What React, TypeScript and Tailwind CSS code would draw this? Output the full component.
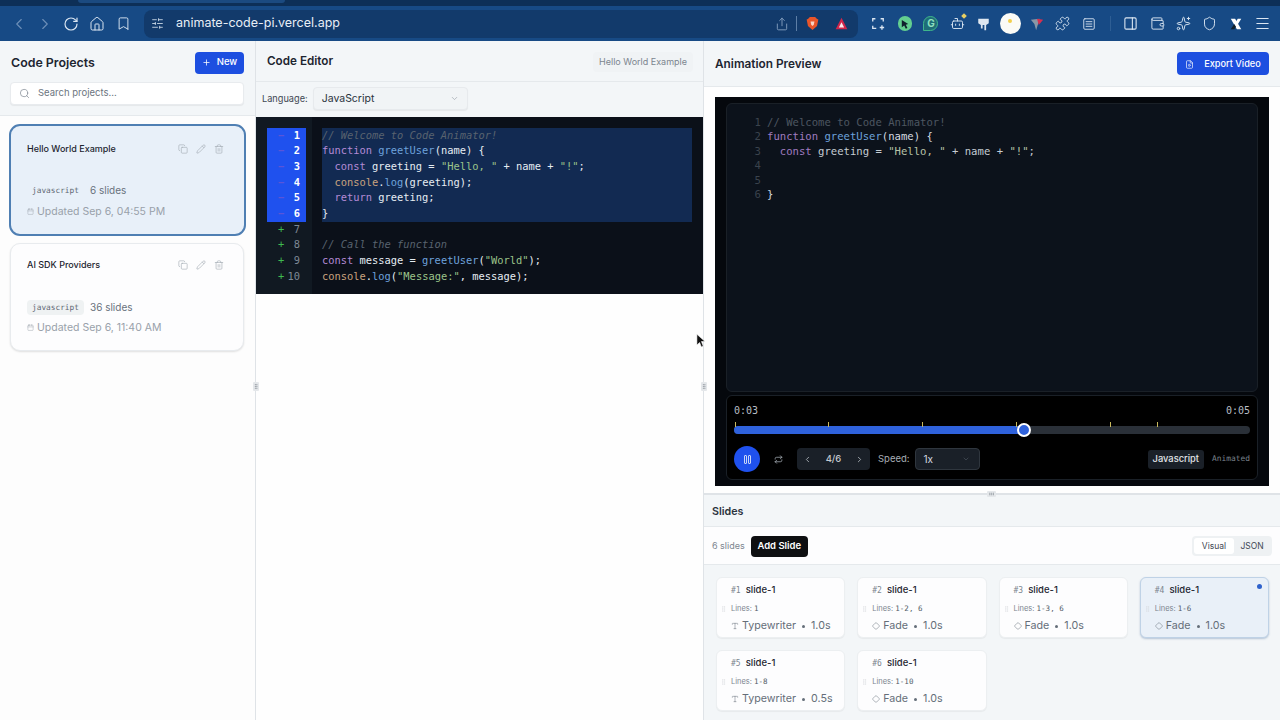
import {
  Bookmark,
  Calendar,
  ChevronDown,
  ChevronLeft,
  ChevronRight,
  Copy,
  FileVideo,
  GripHorizontal,
  GripVertical,
  Home,
  Menu,
  PanelRight,
  Pencil,
  Plus,
  Puzzle,
  Repeat,
  RotateCw,
  Search,
  Share,
  Shield,
  SlidersHorizontal,
  Sparkles,
  Trash2,
  Type,
  Wallet,
  Diamond,
  Bot,
  SquareMenu,
} from "lucide-react";

type Token = [string, string];

const kw = "text-[#b48ad6]";
const fn = "text-[#6ea2dc]";
const str = "text-[#9cc48a]";
const txt = "text-[#e6edf3]";
const cm = "text-[#59636f] italic";
const con = "text-[#c9a27e]";

const editorLines: Token[][] = [
  [["// Welcome to Code Animator!", cm]],
  [["function ", kw], ["greetUser", fn], ["(name) {", txt]],
  [["  const ", kw], ["greeting = ", txt], ['"Hello, "', str], [" + name + ", txt], ['"!"', str], [";", txt]],
  [["  console", con], [".", txt], ["log", fn], ["(greeting);", txt]],
  [["  return ", kw], ["greeting;", txt]],
  [["}", txt]],
  [],
  [["// Call the function", cm]],
  [["const ", kw], ["message = ", txt], ["greetUser", fn], ["(", txt], ['"World"', str], [");", txt]],
  [["console", con], [".", txt], ["log", fn], ["(", txt], ['"Message:"', str], [", message);", txt]],
];

const previewLines: Token[][] = [
  [["// Welcome to Code Animator!", "text-[#4d5661]"]],
  [["function ", "text-[#a07cc0]"], ["greetUser", fn], ["(name) {", "text-[#d5dbe1]"]],
  [["  const ", "text-[#a07cc0]"], ["greeting = ", "text-[#c5ccd3]"], ['"Hello, "', "text-[#b7c2a8]"], [" + name + ", "text-[#c5ccd3]"], ['"!"', "text-[#b7c2a8]"], [";", "text-[#c5ccd3]"]],
  [],
  [],
  [["}", "text-[#d5dbe1]"]],
];

const slides = [
  { id: 1, lines: "1", kind: "Typewriter", time: "1.0s" },
  { id: 2, lines: "1-2, 6", kind: "Fade", time: "1.0s" },
  { id: 3, lines: "1-3, 6", kind: "Fade", time: "1.0s" },
  { id: 4, lines: "1-6", kind: "Fade", time: "1.0s", active: true },
  { id: 5, lines: "1-8", kind: "Typewriter", time: "0.5s" },
  { id: 6, lines: "1-10", kind: "Fade", time: "1.0s" },
];

const ticks = [1, 94, 188, 282, 376, 423];

const mono = "font-['DejaVu_Sans_Mono',monospace]";

function ExtSlot({ children }: { children: React.ReactNode }) {
  return <div className="w-[26.4px] flex items-center justify-center shrink-0">{children}</div>;
}

function BrowserBar() {
  return (
    <div className="shrink-0">
      <div className="h-[6px] bg-[#0d2f57]">
        <div className="ml-[78px] w-[207px] h-[3px] bg-[#1b4a80] rounded-b" />
      </div>
      <div className="h-[35px] bg-[#174a85] flex items-center text-[#dbe6f2]">
        <div className="w-[144px] flex items-center shrink-0 pl-[10px] gap-[8px]">
          <ChevronLeft className="w-[18px] h-[18px] text-[#6d8fb8]" strokeWidth={1.5} />
          <ChevronRight className="w-[18px] h-[18px] text-[#6d8fb8]" strokeWidth={1.5} />
          <RotateCw className="w-[16px] h-[16px] ml-[1px]" strokeWidth={1.75} />
          <Home className="w-[16px] h-[16px] ml-[2px]" strokeWidth={1.5} />
          <Bookmark className="w-[15px] h-[15px] ml-[3px]" strokeWidth={1.5} />
        </div>
        <div className="w-[714px] h-[28px] bg-[#123a6b] rounded-[8px] flex items-center shrink-0">
          <SlidersHorizontal className="w-[13px] h-[13px] ml-[7px]" strokeWidth={1.5} />
          <span className="ml-[12px] text-[12.5px] text-[#e8eef6]">animate-code-pi.vercel.app</span>
          <div className="ml-auto flex items-center">
            <Share className="w-[14px] h-[14px] text-[#8aa3c2]" strokeWidth={1.5} />
            <div className="w-px h-[15px] bg-[#5d7ea6] ml-[7px] mr-[9px]" />
            <svg viewBox="0 0 20 22" className="w-[13px] h-[15px]">
              <path d="M3 4l3-3h8l3 3 2 1-2 10-7 6-7-6L1 5z" fill="#e8552a" />
              <path d="M7 8h6l-1 5-2 2-2-2z" fill="#f7d4c5" />
            </svg>
            <div className="w-[16px]" />
            <svg viewBox="0 0 20 20" className="w-[13px] h-[13px]">
              <path d="M10 1l9 18H1z" fill="#d1264b" />
              <path d="M10 8l4 8H6z" fill="#fbe9ec" />
            </svg>
            <div className="w-[10px]" />
          </div>
        </div>
        <div className="flex items-center ml-[7px]">
          <ExtSlot>
            <svg viewBox="0 0 16 16" className="w-[14px] h-[14px]" fill="none" stroke="currentColor" strokeWidth="1.5">
              <path d="M5 2H2v3M11 2h3v3M2 10v3h4M10 12h5M12.5 9.5v5" />
            </svg>
          </ExtSlot>
          <ExtSlot>
            <div className="w-[14px] h-[15px] rounded-full bg-[#63cf90] flex items-center justify-center">
              <svg viewBox="0 0 10 12" className="w-[8px] h-[10px]"><path d="M1 1l8 5-3 1 2 4-2 1-2-4-3 2z" fill="#10202c" /></svg>
            </div>
          </ExtSlot>
          <ExtSlot>
            <div className="w-[15px] h-[15px] rounded-full rounded-bl-none bg-[#1f6d78] border-[1.5px] border-[#3fb68b] flex items-center justify-center text-[10px] font-bold text-[#8fe0bf]">G</div>
          </ExtSlot>
          <ExtSlot>
            <div className="relative">
              <Bot className="w-[15px] h-[15px]" strokeWidth={1.5} />
              <div className="absolute right-[-1px] top-[-2px] w-[4px] h-[4px] rotate-45 bg-[#e9cf63]" />
            </div>
          </ExtSlot>
          <ExtSlot>
            <svg viewBox="0 0 14 16" className="w-[13px] h-[14px]"><path d="M1 2h12v5l-3 2v6H8V9H6v4H4V9L1 7z" fill="#dfe7f0" /></svg>
          </ExtSlot>
          <ExtSlot>
            <div className="w-[21px] h-[21px] rounded-full bg-[#fbfbf6] flex items-center justify-center">
              <div className="w-[4px] h-[4px] rounded-full bg-[#f2cf4a] mb-[6px]" />
            </div>
          </ExtSlot>
          <ExtSlot>
            <svg viewBox="0 0 16 16" className="w-[14px] h-[14px]"><path d="M1 3l10-1-4 13-2-7z" fill="#8a97a6" /><path d="M8 2l7 1-5 6z" fill="#d92f4f" /></svg>
          </ExtSlot>
          <ExtSlot><Puzzle className="w-[15px] h-[15px]" strokeWidth={1.5} /></ExtSlot>
          <ExtSlot><SquareMenu className="w-[14px] h-[14px]" strokeWidth={1.5} /></ExtSlot>
          <div className="w-px h-[15px] bg-[#2e5e94] mx-[7px]" />
          <ExtSlot><PanelRight className="w-[15px] h-[15px]" strokeWidth={1.75} /></ExtSlot>
          <ExtSlot><Wallet className="w-[15px] h-[15px]" strokeWidth={1.5} /></ExtSlot>
          <ExtSlot><Sparkles className="w-[15px] h-[15px]" strokeWidth={1.5} /></ExtSlot>
          <ExtSlot><Shield className="w-[15px] h-[15px]" strokeWidth={1.5} /></ExtSlot>
          <ExtSlot>
            <svg viewBox="0 0 16 16" className="w-[14px] h-[14px]"><path d="M2 2l5 0 7 12-5 0z" fill="#fff" /><path d="M14 2l-4 0-3 5 2 3z" fill="#fff" /><path d="M2 14l4 0 2-3-2-3z" fill="#10202c" /></svg>
          </ExtSlot>
          <ExtSlot><Menu className="w-[17px] h-[17px]" strokeWidth={1.5} /></ExtSlot>
        </div>
      </div>
    </div>
  );
}

function ProjectCard({ name, count, updated, active }: { name: string; count: string; updated: string; active?: boolean }) {
  return (
    <div
      className={
        active
          ? "mx-[9px] h-[112px] rounded-[11px] border-2 border-[#4f7fb3] bg-[#e8f0f9] px-[16px] pt-[15px]"
          : "ml-[10px] mr-[11px] h-[108px] rounded-[10px] border border-[#e8ebee] bg-[#fdfdfe] shadow-[0_1px_2px_rgba(0,0,0,0.12)] px-[16px] pt-[13px]"
      }
    >
      <div className="flex items-center justify-between h-[16px]">
        <span className="text-[9px] font-medium text-[#1d2530]">{name}</span>
        <div className={active ? "flex items-center gap-[8px] mr-[4px] text-[#a4abb3]" : "flex items-center gap-[8px] mr-[3px] text-[#a4abb3]"}>
          <Copy className="w-[10px] h-[10px]" strokeWidth={1.5} />
          <Pencil className="w-[10px] h-[10px]" strokeWidth={1.5} />
          <Trash2 className="w-[10px] h-[10px]" strokeWidth={1.5} />
        </div>
      </div>
      <div className={active ? "mt-[26px] flex items-center gap-[6px] h-[15px]" : "mt-[27px] flex items-center gap-[6px] h-[15px]"}>
        <span className={`${mono} text-[7.8px] text-[#5f6873] px-[5px] py-[2px] rounded ${active ? "bg-[#e8f0f9]" : "bg-[#eff2f3]"}`}>javascript</span>
        <span className="text-[10px] text-[#69727d]">{count}</span>
      </div>
      <div className={active ? "mt-[6px] flex items-center gap-[3px] text-[10.5px] text-[#99a1aa]" : "mt-[5px] flex items-center gap-[3px] text-[10.5px] text-[#99a1aa]"}>
        <Calendar className="w-[7px] h-[7px]" strokeWidth={1.5} />
        <span>{updated}</span>
      </div>
    </div>
  );
}

function Sidebar() {
  return (
    <aside className="w-[256px] shrink-0 bg-[#fdfdfd] border-r border-[#dfe3e7] relative">
      <div className="h-[75px] bg-[#f3f6f8] border-b border-[#e5e9ec] pl-[10px] pr-[11px] pt-[11px]">
        <div className="flex items-center justify-between h-[21px]">
          <span className="mt-[2px] ml-[1px] text-[12.4px] font-semibold text-[#1d2530]">Code Projects</span>
          <button className="w-[49px] h-[22px] bg-[#1d4fe0] rounded-[4px] flex items-center justify-center gap-[6px] text-white text-[9.5px] font-medium">
            <Plus className="w-[9px] h-[9px]" />
            New
          </button>
        </div>
        <div className="mt-[9px] h-[23px] bg-white rounded-[4px] border border-[#e8ebee] shadow-[0_1px_1px_rgba(0,0,0,0.06)] flex items-center pl-[8px] gap-[8px]">
          <Search className="w-[11px] h-[11px] text-[#7c858f]" strokeWidth={1.5} />
          <span className="text-[9.5px] text-[#6c7580]">Search projects...</span>
        </div>
      </div>
      <div className="pt-[8px] flex flex-col gap-[7px]">
        <ProjectCard name="Hello World Example" count="6 slides" updated="Updated Sep 6, 04:55 PM" active />
        <ProjectCard name="AI SDK Providers" count="36 slides" updated="Updated Sep 6, 11:40 AM" />
      </div>
      <Grip />
    </aside>
  );
}

function Grip() {
  return (
    <div className="absolute right-[-4px] top-[341px] w-[6px] h-[9px] bg-[#e4e7ea] rounded-[1px] flex items-center justify-center z-10">
      <GripVertical className="w-[6px] h-[7px] text-[#7d858e]" strokeWidth={1.5} />
    </div>
  );
}

function Editor() {
  return (
    <section className="w-[448px] shrink-0 bg-[#fefefe] border-r border-[#dfe3e7] flex flex-col relative">
      <div className="h-[41px] bg-[#f3f6f8] border-b border-[#e5e9ec] flex items-center justify-between pl-[11px] pr-[10px] pt-[2px] shrink-0">
        <span className="text-[11.7px] font-semibold text-[#1d2530]">Code Editor</span>
        <span className="text-[9px] text-[#7c858f] bg-[#f0f3f5] px-[6px] py-[3px] rounded-[4px]">Hello World Example</span>
      </div>
      <div className="h-[35px] bg-[#f3f6f8] flex items-center pl-[6px] pb-[2px] gap-[5px] shrink-0">
        <span className="text-[9.2px] text-[#3f4853]">Language:</span>
        <div className="w-[155px] h-[23px] bg-[#f1f4f6] rounded-[4px] border border-[#e7eaed] shadow-[0_1px_1px_rgba(0,0,0,0.06)] flex items-center justify-between pl-[8px] pr-[8px]">
          <span className="text-[10.5px] text-[#2b333d]">JavaScript</span>
          <ChevronDown className="w-[9px] h-[9px] text-[#a4abb3]" />
        </div>
      </div>
      <div className={`h-[177px] bg-[#0b1019] flex ${mono} text-[10.4px] leading-[15.7px] shrink-0`}>
        <div className="w-[56px] shrink-0 bg-[#111922] pt-[10.5px] pl-[11px]">
          {editorLines.map((_, i) => (
            <div
              key={i}
              className={i < 6 ? "w-[39px] h-[15.7px] bg-[#1f51ee] flex justify-between pl-[11px] pr-[6px] text-white font-bold" : "w-[39px] h-[15.7px] flex justify-between pl-[11px] pr-[6px] text-[#7e8894]"}
            >
              <span className={i < 6 ? "text-[#5a55d8]" : "text-[#3fb950]"}>{i < 6 ? "−" : "+"}</span>
              <span>{i + 1}</span>
            </div>
          ))}
        </div>
        <div className="flex-1 pt-[10.5px] pl-[10px] pr-[11px]">
          {editorLines.map((line, i) => (
            <div key={i} className={i < 6 ? "h-[15.7px] whitespace-pre bg-[#122a52]" : "h-[15.7px] whitespace-pre"}>
              {line.map(([t, c], j) => (
                <span key={j} className={c}>{t}</span>
              ))}
            </div>
          ))}
        </div>
      </div>
      <Grip />
    </section>
  );
}

function Player() {
  return (
    <div className="mt-[3px] mx-[11px] h-[85px] rounded-[6px] border border-[#1a2027] bg-black px-[7px] pt-[9px]">
      <div className={`flex justify-between ${mono} text-[10px] text-[#b8bec5] h-[12px] leading-[12px]`}>
        <span>0:03</span>
        <span>0:05</span>
      </div>
      <div className="relative mt-[9px] h-[8px] rounded-full bg-[#2a3038]">
        <div className="h-full w-[290px] rounded-full bg-[#2f62dc]" />
        {ticks.map((t) => (
          <div key={t} style={{ left: t }} className="absolute top-[-4px] w-px h-[5px] bg-[#c9b95c]" />
        ))}
        <div className="absolute left-[283px] top-[-3px] w-[14px] h-[14px] rounded-full bg-[#2f62dc] border-[2px] border-white" />
      </div>
      <div className="mt-[12px] flex items-center h-[26px]">
        <div className="w-[26px] h-[26px] rounded-full bg-[#1f51ee] flex items-center justify-center gap-[1px]">
          <div className="w-[3px] h-[9px] rounded-[1px] border border-[#c9d6f8]" />
          <div className="w-[3px] h-[9px] rounded-[1px] border border-[#c9d6f8]" />
        </div>
        <Repeat className="w-[9px] h-[9px] ml-[14px] text-[#aab1b9]" strokeWidth={2} />
        <div className="ml-[14px] w-[73px] h-[22px] rounded-[4px] bg-[#1a2028] flex items-center justify-between px-[6px] text-[#c3c9cf]">
          <ChevronLeft className="w-[9px] h-[9px]" />
          <span className="text-[9.5px] font-medium">4/6</span>
          <ChevronRight className="w-[9px] h-[9px]" />
        </div>
        <span className="ml-[8px] text-[9.5px] text-[#a8aeb5]">Speed:</span>
        <div className="ml-[5px] w-[65px] h-[22px] rounded-[4px] bg-[#1a2028] border border-[#2f363e] flex items-center justify-between pl-[8px] pr-[9px]">
          <span className="text-[10px] text-[#d5dae0]">1x</span>
          <ChevronDown className="w-[8px] h-[8px] text-[#4c545d]" />
        </div>
        <span className="ml-auto bg-[#1a2028] rounded-[3px] px-[5px] h-[19px] flex items-center text-[9.3px] font-medium text-[#e1e5e9]">Javascript</span>
        <span className={`ml-[8px] ${mono} text-[7.9px] text-[#7a828b]`}>Animated</span>
      </div>
    </div>
  );
}

function SlideCard({ s }: { s: (typeof slides)[number] }) {
  const Icon = s.kind === "Typewriter" ? Type : Diamond;
  return (
    <div
      className={
        s.active
          ? "h-[61px] rounded-[6px] border border-[#bfd2e6] bg-[#e9f0f8] shadow-[0_1px_2px_rgba(60,100,150,0.35)] relative pl-[14px] pt-[6px]"
          : "h-[61px] rounded-[6px] border border-[#eceff1] bg-[#fdfdfe] shadow-[0_1px_1px_rgba(0,0,0,0.05)] relative pl-[14px] pt-[6px]"
      }
    >
      {s.active && <div className="absolute right-[6px] top-[6px] w-[5px] h-[5px] rounded-full bg-[#2f62cc]" />}
      <div className="flex items-center gap-[5px] h-[13px]">
        <span className={`${mono} text-[8px] text-[#7c858f]`}>#{s.id}</span>
        <span className="text-[9.5px] font-medium text-[#1d2530]">slide-1</span>
      </div>
      <div className="mt-[6px] h-[11px] flex items-center text-[7.5px] text-[#7c858f] relative">
        <GripVertical className="absolute left-[-11px] w-[7px] h-[8px] text-[#d5d9dd]" strokeWidth={1.5} />
        <span>Lines:&nbsp;</span>
        <span className={`${mono} text-[#545d68]`}>{s.lines}</span>
      </div>
      <div className="mt-[4px] flex items-center text-[10.7px] text-[#656e79]">
        <Icon className="w-[8px] h-[8px] mr-[3px]" strokeWidth={1.5} />
        <span>{s.kind}</span>
        <span className="w-[3px] h-[3px] rounded-full bg-[#656e79] mx-[6px]" />
        <span>{s.time}</span>
      </div>
    </div>
  );
}

function RightPanel() {
  return (
    <section className="flex-1 min-w-0 flex flex-col bg-white">
      <div className="h-[46px] bg-[#f3f6f8] border-b border-[#e5e9ec] flex items-center justify-between pl-[11px] pr-[11px] shrink-0">
        <span className="mt-[2px] text-[11.8px] font-semibold text-[#1d2530]">Animation Preview</span>
        <button className="w-[92px] h-[23px] bg-[#1d4fe0] rounded-[4px] flex items-center justify-center gap-[10px] pt-[1px] text-white text-[9.2px] font-medium">
          <FileVideo className="w-[9px] h-[9px]" strokeWidth={1.75} />
          Export Video
        </button>
      </div>
      <div className="h-[408px] bg-[#fefefe] pt-[10px] px-[11px] shrink-0 border-b-2 border-[#dfe3e7] relative">
        <div className="h-[389px] pt-[6px] bg-[#05080d]">
          <div className="h-[289px] mx-[11px] bg-[#0c121b] rounded-[6px] border border-[#1a2027] flex">
            <div className={`${mono} text-[10.6px] leading-[14.6px] w-[38px] pt-[10.5px] text-right pr-[4px] text-[#3b434d] whitespace-pre`}>
              {previewLines.map((_, i) => (
                <div key={i} className="h-[14.6px]">{i + 1}</div>
              ))}
            </div>
            <div className={`${mono} text-[10.6px] leading-[14.6px] pt-[10.5px] pl-[2px] whitespace-pre`}>
              {previewLines.map((line, i) => (
                <div key={i} className="h-[14.6px]">
                  {line.map(([t, c], j) => (
                    <span key={j} className={c}>{t}</span>
                  ))}
                </div>
              ))}
            </div>
          </div>
          <Player />
        </div>
        <div className="absolute bottom-[-4px] left-[283px] w-[9px] h-[6px] bg-[#e4e7ea] rounded-[1px] flex items-center justify-center">
          <GripHorizontal className="w-[7px] h-[6px] text-[#7d858e]" strokeWidth={1.5} />
        </div>
      </div>
      <div className="h-[32px] bg-[#f3f6f8] border-b border-[#e5e9ec] pl-[8px] pt-[3px] flex items-center shrink-0">
        <span className="text-[10.7px] font-semibold text-[#2b333d]">Slides</span>
      </div>
      <div className="h-[38px] bg-[#fdfdfe] border-b border-[#e5e9ec] pl-[8px] pr-[8px] pt-[1px] flex items-center shrink-0">
        <span className="text-[9px] text-[#7c858f]">6 slides</span>
        <button className="ml-[6px] w-[57px] h-[21px] bg-[#0e0f11] rounded-[4px] text-white text-[9.5px] font-semibold">Add Slide</button>
        <div className="ml-auto w-[80px] h-[20px] bg-[#eef1f3] rounded-[4px] flex items-center p-[2px] text-[8.5px] text-[#3f4853]">
          <span className="w-[40px] h-[16px] bg-white rounded-[3px] flex items-center justify-center">Visual</span>
          <span className="flex-1 text-center">JSON</span>
        </div>
      </div>
      <div className="flex-1 bg-[#f3f6f8] pl-[12px] pr-[11px] pt-[12px] grid grid-cols-4 gap-x-[12px] gap-y-[12px] content-start">
        {slides.map((s) => (
          <SlideCard key={s.id} s={s} />
        ))}
      </div>
    </section>
  );
}

export default function App() {
  return (
    <div className="relative w-[1280px] h-[720px] overflow-hidden flex flex-col font-['Inter',sans-serif]">
      <BrowserBar />
      <main className="flex-1 flex min-h-0">
        <Sidebar />
        <Editor />
        <RightPanel />
      </main>
      {/* mouse pointer caught in the capture */}
      <svg viewBox="0 0 10 16" className="absolute left-[696px] top-[334px] w-[9px] h-[15px] z-20">
        <path d="M1 0v12l3-3 2 5 2-1-2-5h4z" fill="#111" stroke="#fff" strokeWidth="0.6" />
      </svg>
    </div>
  );
}
